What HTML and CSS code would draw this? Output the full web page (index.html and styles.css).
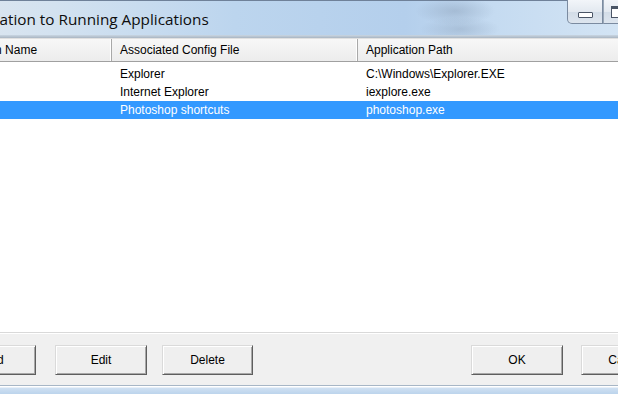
FILE: index.html
```html
<!DOCTYPE html>
<html>
<head>
<meta charset="utf-8">
<link rel="stylesheet" href="styles.css">
</head>
<body>
<div class="window">
  <div class="titlebar">
    <span class="title">Application to Running Applications</span>
    <div class="spacer"></div>
    <div class="caption-buttons">
      <div class="cap-btn cap-min"><span class="min-glyph"></span></div>
      <div class="cap-btn cap-max"><span class="max-glyph"></span></div>
    </div>
  </div>
  <div class="frame-line"></div>
  <div class="listview">
    <div class="lv-header">
      <div class="col c1">Application Name</div>
      <div class="col c2">Associated Config File</div>
      <div class="col c3">Application Path</div>
    </div>
    <div class="lv-body">
      <div class="row">
        <div class="cell c1"></div>
        <div class="cell c2">Explorer</div>
        <div class="cell c3">C:\Windows\Explorer.EXE</div>
      </div>
      <div class="row">
        <div class="cell c1"></div>
        <div class="cell c2">Internet Explorer</div>
        <div class="cell c3">iexplore.exe</div>
      </div>
      <div class="row selected">
        <div class="cell c1"></div>
        <div class="cell c2">Photoshop shortcuts</div>
        <div class="cell c3">photoshop.exe</div>
      </div>
    </div>
  </div>
  <div class="button-panel">
    <div class="btn-group left">
      <button class="btn btn-add">Add</button>
      <button class="btn btn-edit">Edit</button>
      <button class="btn btn-delete">Delete</button>
    </div>
    <div class="btn-group right">
      <button class="btn">OK</button>
      <button class="btn btn-cancel">Cancel</button>
    </div>
  </div>
  <div class="bottom-frame"></div>
</div>
</body>
</html>
```
FILE: styles.css
```css
html, body {
  margin: 0;
  padding: 0;
}
body {
  width: 618px;
  height: 394px;
  overflow: hidden;
  background: #c4d9ee;
  font-family: "Liberation Sans", Arial, sans-serif;
  font-size: 12px;
  color: #000;
}
.window {
  width: 760px;
  margin-left: -65px;
  display: flex;
  flex-direction: column;
  height: 394px;
}
.titlebar {
  height: 35px;
  display: flex;
  align-items: flex-start;
  background:
    radial-gradient(ellipse 40px 14px at 520px 10px, rgba(120,140,165,0.35), rgba(120,140,165,0) 100%),
    radial-gradient(ellipse 40px 12px at 525px 28px, rgba(120,140,165,0.3), rgba(120,140,165,0) 100%),
    linear-gradient(90deg, #dfe7ef 0px, #d3e2f0 120px, #bcd5ee 300px, #b4cfec 470px, #c5dbf1 560px, #d3e4f4 683px);
  border-top: 1px solid #6f8199;
  box-sizing: border-box;
}
.title {
  font-family: "Open Sans", "Noto Sans", sans-serif;
  font-size: 15.3px;
  color: #0d0d0d;
  margin-left: 21px;
  margin-top: 8px;
  white-space: nowrap;
}
.spacer { flex: 1; }
.caption-buttons {
  display: flex;
  margin-right: 65px;
  margin-top: -1px;
}
.cap-btn {
  height: 24px;
  box-sizing: border-box;
  border: 1px solid #7b8ba0;
  border-top: none;
  background: linear-gradient(#f2f5f9, #e3e9f0 50%, #d2dce7 51%, #dde5ee);
  display: flex;
  align-items: center;
  justify-content: center;
}
.cap-min {
  width: 36px;
  border-bottom-left-radius: 5px;
}
.cap-max {
  width: 27px;
  border-left: 1px solid #9aa8b8;
}
.min-glyph {
  width: 13px;
  height: 4px;
  border: 1px solid #4a5566;
  background: #fff;
  border-radius: 1px;
  margin-top: 6px;
}
.max-glyph {
  width: 10px;
  height: 8px;
  border: 1px solid #4a5566;
  border-top-width: 3px;
  background: #fff;
}
.frame-line {
  height: 3px;
  background: linear-gradient(#c9d6e2, #a9b5c2);
}
.listview {
  flex: 1;
  background: #fff;
  display: flex;
  flex-direction: column;
  border-bottom: 1px solid #d9d9d9;
}
.lv-header {
  display: flex;
  height: 22px;
  background: linear-gradient(#f7f7f7, #ececec);
  border-bottom: 1px solid #a0a0a0;
  border-top: 1px solid #e0e0e0;
}
.col {
  box-sizing: border-box;
  padding-left: 8px;
  line-height: 22px;
  white-space: nowrap;
  overflow: hidden;
  border-right: 1px solid #a9a9a9;
  box-shadow: inset -1px 0 0 #fff;
}
.c1 { width: 177px; flex: none; }
.c2 { width: 246px; flex: none; }
.c3 { flex: 1; }
.lv-header .c3 { border-right: none; box-shadow: none; }
.lv-body {
  padding-top: 3px;
  display: flex;
  flex-direction: column;
}
.row {
  display: flex;
  height: 18px;
}
.cell {
  box-sizing: border-box;
  padding-left: 8px;
  line-height: 18px;
  white-space: nowrap;
}
.row.selected {
  background: #3399ff;
  color: #fff;
}
.button-panel {
  height: 52px;
  background: #f0f0f0;
  border-top: 1px solid #fff;
  display: flex;
  align-items: flex-start;
  box-sizing: border-box;
  padding-top: 11px;
}
.btn-group { display: flex; }
.btn-group.left { margin-left: 9px; }
.btn-group.right { margin-left: 218px; }
.btn {
  width: 92px;
  height: 30px;
  box-sizing: border-box;
  font-family: "Liberation Sans", Arial, sans-serif;
  font-size: 12px;
  color: #000;
  background: #efefef;
  border: 1px solid;
  border-color: #dadada #5e5e5e #5e5e5e #dadada;
  box-shadow: inset 1px 1px 0 #fff, inset -1px -1px 0 #a8a8a8;
  padding: 0;
  margin: 0;
}
.btn-add { padding-left: 6px; }
.btn-edit { margin-left: 19px; }
.btn-delete { margin-left: 15px; width: 91px; }
.btn-cancel { margin-left: 18px; }
.bottom-frame {
  height: 9px;
  background: linear-gradient(#ffffff 0, #ffffff 1px, #cfe0f2 2px, #bcd4ec);
  border-top: 1px solid #a7b6c6;
  box-sizing: border-box;
}
```
